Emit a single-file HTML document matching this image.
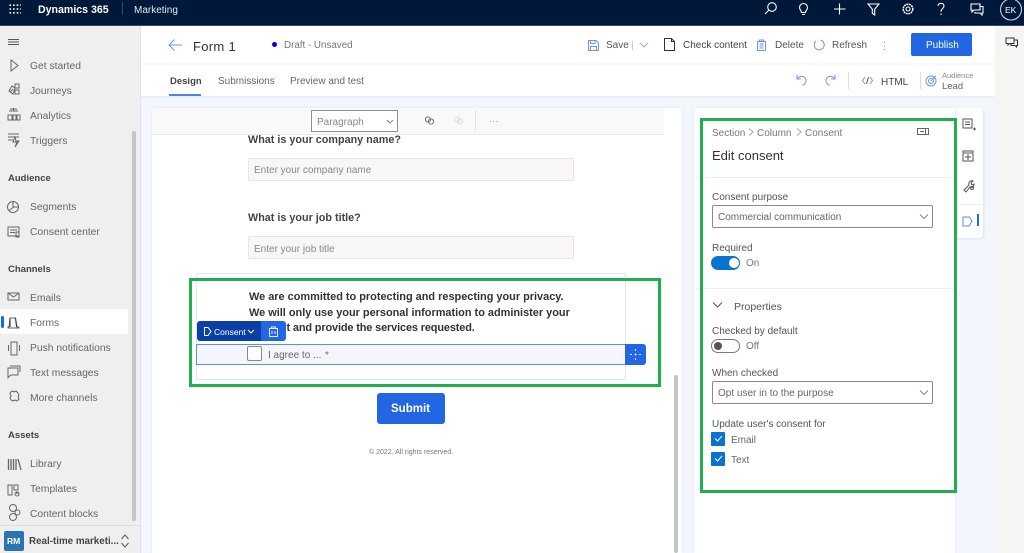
<!DOCTYPE html>
<html><head><meta charset="utf-8"><style>
html,body{margin:0;padding:0;width:1024px;height:553px;overflow:hidden;background:#f3f6fc}
body{font-family:"Liberation Sans",sans-serif;position:relative;color:#444;filter:blur(.35px)}
.a,.t{position:absolute}
.t{white-space:nowrap;font-size:10px;line-height:14px;transform:translateY(1px)}
svg{position:absolute;overflow:visible;fill:none;stroke:#555;stroke-width:1}
.n{left:30px;color:#666;font-size:10.3px;transform:translateY(2px)}
.h{left:8px;color:#444;font-size:9.5px;font-weight:bold}
.lbl{color:#555;font-size:10px}
.dd{position:absolute;left:712px;width:221px;height:23px;border:1px solid #8a8a8a;border-radius:2px;box-sizing:border-box;background:#fff}
.inp{position:absolute;left:248px;width:326px;height:23px;background:#f8f7f5;border:1px solid #e6e6e6;box-sizing:border-box;border-radius:2px}
.q{left:248px;font-size:10.8px;font-weight:bold;color:#444}
.cons{left:249px;font-size:10.93px;font-weight:bold;color:#333;line-height:16px}
.green{position:absolute;border:3px solid #1fae50;box-sizing:border-box}
.cb{position:absolute;left:711px;width:14px;height:14px;background:#0a73d0;border-radius:1px}
</style></head><body>

<!-- top bar -->
<div class="a" style="left:0;top:0;width:1024px;height:25px;background:#00183a"></div>
<div class="a" style="left:0;top:25px;width:1024px;height:1px;background:#39475c"></div>
<svg style="left:0;top:0" width="30" height="25"><g stroke="#fff" stroke-width="1.6" stroke-dasharray="1.6 2"><path d="M9.5 5.2H21M9.5 9H21M9.5 12.8H21"/></g></svg>
<div class="t" style="left:38px;top:2px;color:#fff;font-size:10.6px;font-weight:bold;line-height:14px">Dynamics 365</div>
<div class="a" style="left:122px;top:2px;width:1px;height:13px;background:#3a4960"></div>
<div class="t" style="left:134px;top:3px;color:#e6e9ee;font-size:10px">Marketing</div>
<svg style="left:0;top:0" width="1024" height="25"><g stroke="#fff" stroke-width="1.1">
<circle cx="772" cy="7" r="4.3"/><path d="M768.8 10.2L765 14"/>
<path d="M802 14.5h3M801.5 12.5c0-2-2-2.5-2-5a4 4 0 0 1 8 0c0 2.500-2 3-2 5z"/>
<path d="M839.500 3.500v11M834 9h11.500"/>
<path d="M868 4h11l-4.300 5.200v5.800l-2.400-1.500v-4.300z"/>
<circle cx="908" cy="9" r="2"/><circle cx="908" cy="9" r="4.800" stroke-dasharray="2 .6" stroke-width="1.500"/>
<path d="M938 6c0-3.600 6-3.600 6 0 0 2.500-3 2.500-3 5.500M941 13.500v1.500"/>
<path d="M971 4h9v6h-6l-2 2v-2h-1zM980 6.500h3v6.500h-1v2l-2-2h-5v-1"/>
<circle cx="1011" cy="9.500" r="10.500" stroke="#c9ced6"/></g></svg>
<div class="t" style="left:1005px;top:2px;color:#fff;font-size:8.500px">EK</div>

<!-- sidebar -->
<div class="a" style="left:0;top:26px;width:141px;height:527px;background:#efefef;border-right:1px solid #e3e3e3;box-sizing:border-box"></div>
<div class="a" style="left:132px;top:131px;width:4px;height:390px;background:#c6c6c6;border-radius:2px"></div>
<div class="a" style="left:0;top:309px;width:128px;height:25px;background:#fff"></div>
<div class="a" style="left:1px;top:316px;width:3px;height:12px;background:#0f6cf0;border-radius:2px"></div>
<div class="a" style="left:0;top:525px;width:141px;height:1px;background:#ddd"></div>

<svg style="left:0;top:27px" width="30" height="500"><g stroke="#666">
<path d="M8 12.500h11M8 15h11M8 17.500h11" stroke="#555"/>
<path d="M11 33v11l7-5.500z"/>
<path d="M9 64l3-5 3 2-2 6zM15 57h4v4h-4zM15 63h4v4h-4zM10 65l3-3"/>
<path d="M9 84h9M13.500 81v3M10 82h7M8 88h4v5H8zM13 88h3v5h-3zM17 88h3v5h-3z"/>
<path d="M8 107h11M8 110h11M8 113h5M15 110l-2 5h4l-2 5 4-6h-3z"/>
<circle cx="13" cy="180" r="5.500"/><path d="M13 174.500v6l-4 3M13 180h5.500"/>
<path d="M8 200h11v9H8zM10 203h7M10 205.500h5M16 205h3v5h-3z"/>
<path d="M8 266h11v7H8zM8 266l5.500 4 5.500-4"/>
<path d="M10 291h5.500l1.500 9h2v1H8v-1h1zM8 301h11"/><path d="M10 291v9M15.500 291l1 9" stroke="#333"/>
<path d="M11 315h6v13h-6zM8.500 318v6M19.500 318v6"/>
<path d="M8 341h10v7h-7l-3 2.500zM10 339h10v6"/>
<path d="M10 366l2-2 2 1 2-1 2 2 1 2-1 2 1 2-2 2-2-1-2 1-2-1-1-2 1-2-1-2z"/>
<path d="M8.500 432v11M11 432v11M13.500 432v11M16 432v11M18 432l3 11" stroke-width="1.300"/>
<path d="M8 458h4v10H8zM14 458h4v5h-4zM16 466l2.500 0"/><circle cx="17" cy="467" r="2"/>
<circle cx="13" cy="481" r="3.500"/><circle cx="13" cy="490" r="3.500"/><circle cx="17.500" cy="485.500" r="2.500"/></g></svg>

<div class="t n" style="top:58px">Get started</div>
<div class="t n" style="top:83px">Journeys</div>
<div class="t n" style="top:108px">Analytics</div>
<div class="t n" style="top:133px">Triggers</div>
<div class="t h" style="top:171px">Audience</div>
<div class="t n" style="top:199px">Segments</div>
<div class="t n" style="top:224px">Consent center</div>
<div class="t h" style="top:262px">Channels</div>
<div class="t n" style="top:290px">Emails</div>
<div class="t n" style="top:315px">Forms</div>
<div class="t n" style="top:340px">Push notifications</div>
<div class="t n" style="top:365px">Text messages</div>
<div class="t n" style="top:390px">More channels</div>
<div class="t h" style="top:428px">Assets</div>
<div class="t n" style="top:456px">Library</div>
<div class="t n" style="top:481px">Templates</div>
<div class="t n" style="top:506px">Content blocks</div>
<div class="a" style="left:4px;top:531px;width:20px;height:20px;background:#2a74b3;border-radius:2px"></div>
<div class="t" style="left:7px;top:533px;color:#fff;font-size:8.500px;font-weight:bold">RM</div>
<div class="t" style="left:29px;top:534px;color:#444;font-size:9.800px;font-weight:bold">Real-time marketi...</div>
<svg style="left:120px;top:533px" width="12" height="16"><path d="M1.500 6L5 2l3.500 4M1.500 10L5 14l3.500-4" stroke="#555"/></svg>

<!-- command bar -->
<div class="a" style="left:141px;top:26px;width:854px;height:37px;background:#fff"></div>
<div class="a" style="left:141px;top:65px;width:854px;height:31px;background:#fff;box-shadow:0 1px 2px #e4e8ef"></div>
<div class="a" style="left:141px;top:63px;width:854px;height:2px;background:#f8f8f8"></div>
<div class="a" style="left:995px;top:26px;width:29px;height:527px;background:#f6f5f3"></div>
<svg style="left:1005px;top:36px" width="15" height="14"><path d="M1 2h8v5.500H4.500L3 9V7.500H1zM9 4h3.500v5.500H11.500V11L10 9.500H6V8" stroke="#333"/></svg>

<svg style="left:168px;top:38px" width="15" height="14"><path d="M1 7h13M6.500 1.500L1 7l5.500 5.500" stroke="#6f93e8"/></svg>
<div class="t" style="left:193px;top:37px;color:#333;font-size:13px;line-height:17px;letter-spacing:.3px">Form 1</div>
<div class="a" style="left:272px;top:42px;width:5px;height:5px;background:#0000ee;border-radius:50%"></div>
<div class="t" style="left:284px;top:38px;color:#777;font-size:9.800px">Draft - Unsaved</div>

<svg style="left:588px;top:40px" width="11" height="11"><path d="M.5.500h7.500l2.500 2.500v7.500H.5zM2.500 10.500V6.500h6v4M2.500.500v3h4.500v-3" stroke="#6f93e8"/></svg>
<div class="t" style="left:606px;top:38px;color:#555">Save</div>
<div class="a" style="left:632px;top:41px;width:1px;height:9px;background:#ccc"></div>
<svg style="left:639px;top:42px" width="10" height="7"><path d="M1 1l4 4 4-4" stroke="#aaa"/></svg>
<svg style="left:664px;top:38px" width="11" height="13"><path d="M.5.500h7l3 3v9H.5zM7.500.500v3h3" stroke="#333"/></svg>
<div class="t" style="left:683px;top:38px;color:#444;font-size:10px">Check content</div>
<svg style="left:757px;top:39px" width="9" height="12"><path d="M.5 2.500h8v9h-8zM2.500 2.500v-1.500h4v1.500M2.500 5h4M2.500 7h4M2.500 9h4" stroke="#6f93e8"/></svg>
<div class="t" style="left:775px;top:38px;color:#555">Delete</div>
<svg style="left:813px;top:39px" width="12" height="12"><path d="M3 2A5 5 0 1 0 7.500 1" stroke="#6f93e8"/></svg>
<div class="t" style="left:832px;top:38px;color:#555">Refresh</div>
<svg style="left:883px;top:41px" width="3" height="11"><path d="M1.500 1v1M1.500 4.500v1M1.500 8v1" stroke="#6f93e8"/></svg>
<div class="a" style="left:911px;top:33px;width:61px;height:23px;background:#2266e3;border-radius:2px"></div>
<div class="t" style="left:926px;top:38px;color:#fff;font-size:10px">Publish</div>

<div class="t" style="left:170px;top:74px;color:#444;font-size:9.500px;font-weight:bold">Design</div>
<div class="a" style="left:169px;top:94px;width:32px;height:2px;background:#4f83ea"></div>
<div class="t" style="left:218px;top:74px;color:#666">Submissions</div>
<div class="t" style="left:290px;top:74px;color:#666">Preview and test</div>
<svg style="left:796px;top:74px" width="42" height="13"><g stroke="#6f93e8"><path d="M1 1v4h4M1.500 4.500C4 1 10 2 10 6.500 10 9 8.500 10.500 6.500 11.500"/><path d="M39 1v4h-4M38.500 4.500C36 1 30 2 30 6.500 30 9 31.500 10.500 33.500 11.500"/></g></svg>
<div class="a" style="left:848px;top:72px;width:1px;height:17px;background:#ddd"></div>
<svg style="left:862px;top:76px" width="11" height="9"><path d="M3 1L.5 4.500 3 8M8 1l2.500 3.500L8 8" stroke="#6f93e8"/><path d="M6.500 1L4.500 8" stroke="#555"/></svg>
<div class="t" style="left:881px;top:75px;color:#444">HTML</div>
<div class="a" style="left:920px;top:72px;width:1px;height:17px;background:#ddd"></div>
<svg style="left:925px;top:75px" width="12" height="12"><circle cx="6" cy="6" r="5" stroke="#6f93e8"/><circle cx="6" cy="6" r="2.500" stroke="#6f93e8"/><path d="M6 6l5-5" stroke="#6f93e8"/></svg>
<div class="t" style="left:942px;top:70px;color:#888;font-size:7.500px;line-height:9px">Audience</div>
<div class="t" style="left:942px;top:79px;color:#666;font-size:9.500px">Lead</div>

<!-- canvas -->
<div class="a" style="left:152px;top:108px;width:530px;height:445px;background:#fff;box-shadow:0 0 2px #dde1e8;border-radius:3px 3px 0 0"></div>
<div class="a" style="left:152px;top:108px;width:512px;height:26px;background:#faf9f8;border-bottom:1px solid #e8e8e8;border-radius:3px 0 0 0"></div>
<div class="a" style="left:311px;top:110px;width:87px;height:22px;background:#fff;border:1px solid #8f8f8f;box-sizing:border-box"></div>
<div class="t" style="left:317px;top:115px;color:#888;font-size:10px">Paragraph</div>
<svg style="left:386px;top:119px" width="8" height="5"><path d="M1 1l3 3 3-3" stroke="#7a7ae0"/></svg>
<svg style="left:424px;top:116px" width="60" height="10"><circle cx="4" cy="3.500" r="2.600" stroke="#777"/><circle cx="7" cy="5.500" r="2.600" stroke="#777"/><circle cx="33" cy="3.500" r="2.600" stroke="#ddd"/><circle cx="36" cy="5.500" r="2.600" stroke="#ddd"/></svg>
<div class="a" style="left:475px;top:110px;width:1px;height:21px;background:#e3e3e3"></div>
<div class="t" style="left:489px;top:113px;color:#999;font-size:9px">···</div>
<div class="a" style="left:674px;top:375px;width:4px;height:178px;background:#c6c6c6;border-radius:2px"></div>

<div class="t q" style="top:132px">What is your company name?</div>
<div class="inp" style="top:158px"></div>
<div class="t" style="left:254px;top:163px;color:#888;font-size:10px">Enter your company name</div>
<div class="t q" style="top:210px">What is your job title?</div>
<div class="inp" style="top:236px"></div>
<div class="t" style="left:254px;top:242px;color:#888;font-size:10px">Enter your job title</div>

<div class="a" style="left:196px;top:273px;width:430px;height:107px;border:1px solid #dfe8fa;box-sizing:border-box"></div>
<div class="t cons" style="top:288px">We are committed to protecting and respecting your privacy.</div>
<div class="t cons" style="top:304px">We will only use your personal information to administer your</div>
<div class="t cons" style="top:319px;letter-spacing:-.13px">account and provide the services requested.</div>
<div class="a" style="left:196px;top:344px;width:430px;height:21px;background:#f4f6fd;border:1px solid #5b8fe8;box-sizing:border-box"></div>
<div class="a" style="left:247px;top:346px;width:15px;height:15px;background:#fff;border:1px solid #888;box-sizing:border-box;border-radius:2px"></div>
<div class="t" style="left:268px;top:348px;color:#666">I agree to ...</div>
<div class="t" style="left:325px;top:348px;color:#d2492a">*</div>
<div class="a" style="left:625px;top:344px;width:21px;height:21px;background:#2266e3;border-radius:0 3px 3px 0"></div>
<svg style="left:629px;top:348px" width="13" height="13"><path d="M6.500 1v11M1 6.500h11" stroke="#dbe6fb" stroke-dasharray="2 2.500"/></svg>
<div class="a" style="left:197px;top:321px;width:64px;height:20px;background:#0b3fa6;border-radius:3px 0 0 3px"></div>
<div class="a" style="left:261px;top:321px;width:25px;height:20px;background:#2266e3;border-radius:0 3px 3px 0"></div>
<svg style="left:204px;top:327px" width="8" height="9"><path d="M.5.500h3.500l3 4-3 4H.5z" stroke="#fff"/></svg>
<div class="t" style="left:214px;top:325px;color:#fff;font-size:8.500px;line-height:13px">Consent</div>
<svg style="left:247px;top:329px" width="8" height="5"><path d="M1 1l3 3 3-3" stroke="#fff"/></svg>
<svg style="left:269px;top:326px" width="9" height="11"><path d="M.5 2.500h8v8h-8zM2.500 2.500v-1.500h4v1.500" stroke="#e8eefc"/><path d="M3 5v3M6 5v3" stroke="#e8eefc"/></svg>

<div class="a" style="left:377px;top:393px;width:68px;height:31px;background:#2266e3;border-radius:3px"></div>
<div class="t" style="left:391px;top:401px;color:#fff;font-size:11.500px;font-weight:bold">Submit</div>
<div class="t" style="left:369px;top:445px;color:#777;font-size:7px">© 2022. All rights reserved.</div>

<!-- right panel -->
<div class="a" style="left:694px;top:108px;width:261px;height:445px;background:#fff;box-shadow:0 0 2px #dde1e8;border-radius:3px 0 0 0"></div>
<div class="a" style="left:955px;top:108px;width:28px;height:130px;background:#fff;box-shadow:1px 1px 2px #e0e4ea;border-radius:0 3px 3px 0"></div>
<div class="a" style="left:955px;top:108px;width:1px;height:445px;background:#eee"></div>
<svg style="left:962px;top:118px" width="16" height="116"><g stroke="#555"><path d="M1 1h9v9H1zM3 4h5M3 6.500h5M11 11h3M12.500 9.500v3"/><path d="M1 33h10v10H1zM1 35h10M6 36v6M3 39h6"/><path d="M2 72l5-5c-1-3 2-5 4-4l-2 2 1 2 2-1c0 3-2 4-4 3l-4 5z"/><circle cx="10" cy="70" r="1.500"/></g><path d="M1 99h6l3 4-3 5H1z" stroke="#5c8ce8"/><path d="M10 96v12" stroke="#2266e3" stroke-width="2" transform="translate(6 0)"/></svg>
<div class="a" style="left:956px;top:204px;width:27px;height:1px;background:#eee"></div>

<div class="t" style="left:712px;top:126px;color:#777;font-size:10px">Section</div>
<svg style="left:748px;top:128px" width="6" height="8"><path d="M1 .5L5 4 1 7.500" stroke="#aaa"/></svg>
<div class="t" style="left:757px;top:126px;color:#777;font-size:10px">Column</div>
<svg style="left:796px;top:128px" width="6" height="8"><path d="M1 .5L5 4 1 7.500" stroke="#aaa"/></svg>
<div class="t" style="left:805px;top:126px;color:#777;font-size:10px">Consent</div>
<svg style="left:917px;top:128px" width="12" height="7"><path d="M.5.500h11v6H.5zM8.500.500v6M3 3.500h4" stroke="#666"/></svg>
<div class="t" style="left:712px;top:146px;color:#333;font-size:13px;line-height:17px">Edit consent</div>
<div class="a" style="left:695px;top:177px;width:260px;height:1px;background:#eee"></div>
<div class="t lbl" style="left:712px;top:190px;color:#555">Consent purpose</div>
<div class="dd" style="top:205px"></div>
<div class="t" style="left:718px;top:210px;color:#666">Commercial communication</div>
<svg style="left:919px;top:214px" width="10" height="6"><path d="M1 .5l4 4 4-4" stroke="#888"/></svg>
<div class="t lbl" style="left:712px;top:241px">Required</div>
<div class="a" style="left:711px;top:256px;width:29px;height:14px;background:#0a73d0;border-radius:8px"></div>
<div class="a" style="left:729px;top:258px;width:10px;height:10px;background:#fff;border-radius:50%"></div>
<div class="t" style="left:746px;top:256px;color:#777;font-size:10px">On</div>
<div class="a" style="left:695px;top:288px;width:260px;height:1px;background:#eee"></div>
<svg style="left:712px;top:302px" width="11" height="7"><path d="M1 .5l4.500 4.500L10 .5" stroke="#555"/></svg>
<div class="t" style="left:734px;top:299px;color:#555;font-size:10.500px">Properties</div>
<div class="t lbl" style="left:712px;top:324px">Checked by default</div>
<div class="a" style="left:711px;top:339px;width:29px;height:14px;background:#fff;border:1px solid #777;border-radius:8px;box-sizing:border-box"></div>
<div class="a" style="left:714px;top:342px;width:8px;height:8px;background:#555;border-radius:50%"></div>
<div class="t" style="left:746px;top:339px;color:#777;font-size:10px">Off</div>
<div class="t lbl" style="left:712px;top:366px">When checked</div>
<div class="dd" style="top:381px"></div>
<div class="t" style="left:718px;top:386px;color:#666">Opt user in to the purpose</div>
<svg style="left:919px;top:390px" width="10" height="6"><path d="M1 .5l4 4 4-4" stroke="#888"/></svg>
<div class="t lbl" style="left:712px;top:417px">Update user's consent for</div>
<div class="cb" style="top:432px"></div>
<svg style="left:714px;top:435px" width="9" height="7"><path d="M1 3.500l2.500 2.500L8 1" stroke="#fff"/></svg>
<div class="t" style="left:731px;top:433px;color:#666">Email</div>
<div class="cb" style="top:452px"></div>
<svg style="left:714px;top:455px" width="9" height="7"><path d="M1 3.500l2.500 2.500L8 1" stroke="#fff"/></svg>
<div class="t" style="left:731px;top:453px;color:#666">Text</div>

<!-- annotation boxes -->
<div class="green" style="left:189px;top:278px;width:472px;height:109px"></div>
<div class="green" style="left:700px;top:118px;width:257px;height:375px"></div>
</body></html>
